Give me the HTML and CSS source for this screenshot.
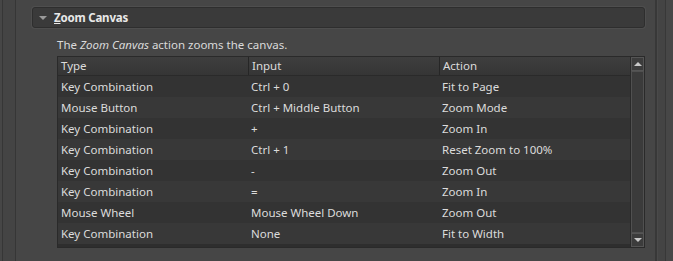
FILE: index.html
```html
<!DOCTYPE html>
<html lang="en">
<head>
  <meta charset="UTF-8" />
  <title>Zoom Canvas</title>
  <link rel="stylesheet" href="styles.css">
</head>
<body>
  <div class="frame">
    <div class="rail-left"></div>

    <div class="content">
      <!-- group header -->
      <div class="group-head">
        <span class="arrow"></span>
        <span class="group-title"><u>Z</u>oom Canvas</span>
      </div>

      <p class="desc">The <i>Zoom Canvas</i> action zooms the canvas.</p>

      <!-- shortcut table -->
      <div class="table">
        <div class="grid">
          <div class="row head">
            <div class="cell">Type</div>
            <div class="cell">Input</div>
            <div class="cell">Action</div>
          </div>
          <div class="row">
            <div class="cell">Key Combination</div>
            <div class="cell">Ctrl + 0</div>
            <div class="cell">Fit to Page</div>
          </div>
          <div class="row alt">
            <div class="cell">Mouse Button</div>
            <div class="cell">Ctrl + Middle Button</div>
            <div class="cell">Zoom Mode</div>
          </div>
          <div class="row">
            <div class="cell">Key Combination</div>
            <div class="cell">+</div>
            <div class="cell">Zoom In</div>
          </div>
          <div class="row alt">
            <div class="cell">Key Combination</div>
            <div class="cell">Ctrl + 1</div>
            <div class="cell">Reset Zoom to 100%</div>
          </div>
          <div class="row">
            <div class="cell">Key Combination</div>
            <div class="cell">-</div>
            <div class="cell">Zoom Out</div>
          </div>
          <div class="row alt">
            <div class="cell">Key Combination</div>
            <div class="cell">=</div>
            <div class="cell">Zoom In</div>
          </div>
          <div class="row">
            <div class="cell">Mouse Wheel</div>
            <div class="cell">Mouse Wheel Down</div>
            <div class="cell">Zoom Out</div>
          </div>
          <div class="row alt">
            <div class="cell">Key Combination</div>
            <div class="cell">None</div>
            <div class="cell">Fit to Width</div>
          </div>
        </div>

        <div class="scrollbar">
          <div class="sb-btn"><span class="tri up"></span></div>
          <div class="sb-handle"></div>
          <div class="sb-btn"><span class="tri down"></span></div>
        </div>
      </div>
    </div>

    <div class="rail-right"></div>
  </div>
</body>
</html>
```

FILE: styles.css
```css
body {
  margin: 0;
  background: #464646;
  font-family: "Noto Sans", "Open Sans", sans-serif;
  font-size: 11.5px;
  color: #dcdcdc;
  overflow: hidden;
}

.frame {
  display: flex;
  height: 261px;
}

.rail-left {
  margin-left: 2px;
  width: 12px;
  border-left: 1px solid #363636;
  border-right: 1px solid #363636;
  background: #444;
}

.content {
  flex: 1;
  padding: 7px 10px 0 16px;
  display: flex;
  flex-direction: column;
}

.rail-right {
  width: 18px;
  background: linear-gradient(to right,
    #383838 0, #383838 2px,
    #4a4a4a 2px, #4a4a4a 3px,
    #444 3px, #444 10px,
    #383838 10px, #383838 11px,
    #474747 11px);
}

/* group header */
.group-head {
  height: 19px;
  border: 1px solid #2e2e2e;
  box-shadow: 0 0 0 1px #4e4e4e;
  border-radius: 3px;
  background: #3a3a3a;
  display: flex;
  align-items: center;
  padding-left: 6px;
}

.arrow {
  width: 0;
  height: 0;
  border-left: 4px solid transparent;
  border-right: 4px solid transparent;
  border-top: 4px solid #9a9a9a;
  margin-right: 7px;
  margin-top: 1px;
}

.group-title {
  font-weight: bold;
  font-size: 11.5px;
  letter-spacing: -0.2px;
  color: #e8e8e8;
}

.desc {
  margin: 7px 0 0 25px;
  height: 20px;
  line-height: 20px;
  color: #dadada;
}

/* table */
.table {
  margin: 1px 0 0 25px;
  width: 586px;
  height: 190px;
  border: 1px solid #2a2a2a;
  background: #2e2e2e;
  display: flex;
}

.grid {
  width: 573px;
  display: flex;
  flex-direction: column;
}

.row {
  display: grid;
  grid-template-columns: 190px 191px 1fr;
  height: 21px;
  background: #333;
}

.row.alt {
  background: #383838;
}

.row .cell {
  padding-left: 3px;
  line-height: 21px;
  white-space: nowrap;
  overflow: hidden;
}

.row.head {
  height: 18px;
  background: linear-gradient(#3e3e3e, #353535);
  border-bottom: 1px solid #2a2a2a;
}

.row.head .cell {
  line-height: 18px;
}

.row.head .cell + .cell {
  border-left: 1px solid #262626;
}

.scrollbar {
  width: 13px;
  border-left: 1px solid #2a2a2a;
  background: #3a3a3a;
  display: flex;
  flex-direction: column;
}

.sb-btn {
  height: 12px;
  border: 1px solid #555;
  background: #3c3c3c;
  display: flex;
  align-items: center;
  justify-content: center;
}

.sb-handle {
  flex: 1;
  border: 1px solid #505050;
  background: #3b3b3b;
}

.tri {
  width: 0;
  height: 0;
  border-left: 4px solid transparent;
  border-right: 4px solid transparent;
}

.tri.up { border-bottom: 4px solid #c8c8c8; }
.tri.down { border-top: 4px solid #c8c8c8; }
```
